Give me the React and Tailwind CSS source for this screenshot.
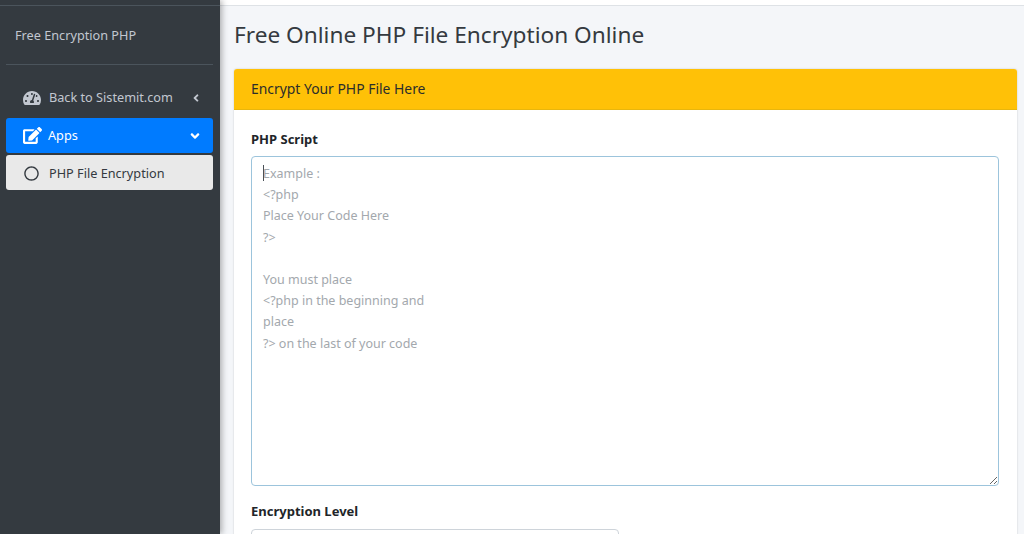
import React from 'react';
import { FaTachometerAlt, FaEdit, FaAngleLeft, FaAngleDown, FaRegCircle } from 'react-icons/fa';

const placeholder = `Example :
<?php
Place Your Code Here
?>

You must place
<?php in the beginning and
place
?> on the last of your code`;

export default function App() {
  return (
    <div className="flex h-screen overflow-hidden bg-[#f4f6f9] text-[#343a40] font-['Noto_Sans',sans-serif]">
      {/* Sidebar */}
      <aside className="w-[220px] shrink-0 bg-[#343a40] shadow-[2px_0_6px_rgba(0,0,0,0.3)] z-10 pt-[5px]">
        <div className="border-t border-[#4b545c]">
          <div className="ml-[6px] mr-[7px] h-[59px] pl-[9px] pt-[2px] flex items-center border-b border-[#4b545c] text-[12.7px] text-[#c2c7d0]">
            Free Encryption PHP
          </div>
        </div>
        <nav className="ml-[6px] mr-[7px] mt-[14px] flex flex-col gap-[2px] text-[12.7px]">
          <div className="h-[35px] mb-[2px] pt-[2px] flex items-center pl-[17px] pr-[11px] text-[#c2c7d0]">
            <FaTachometerAlt className="w-[18px] h-[18px] mr-[8px]" />
            <span className="flex-1">Back to Sistemit.com</span>
            <FaAngleLeft className="w-[12px] h-[12px]" />
          </div>
          <div className="h-[35px] flex items-center pl-[17px] pr-[11px] bg-[#007bff] rounded-[3px] text-white">
            <FaEdit className="w-[19px] h-[19px] mr-[6px]" />
            <span className="flex-1">Apps</span>
            <FaAngleDown className="w-[14px] h-[14px]" />
          </div>
          <div className="h-[35px] pt-[2px] flex items-center pl-[18px] bg-[#e9e9e9] rounded-[3px] text-[#343a40]">
            <FaRegCircle className="w-[15px] h-[15px] mr-[10px]" />
            <span>PHP File Encryption</span>
          </div>
        </nav>
      </aside>

      {/* Content */}
      <main className="flex-1 min-w-0 flex flex-col">
        <div className="h-[6px] shrink-0 bg-white border-b border-[#dee2e6]" />
        <h1 className="ml-[14px] mt-[13px] text-[22.65px] leading-[31px] text-[#343a40]">
          Free Online PHP File Encryption Online
        </h1>
        <section className="ml-[14px] mr-[7px] mt-[19px] bg-white rounded-t-[3px] shadow-[0_0_2px_rgba(0,0,0,0.2)] flex-1">
          <div className="h-[41px] flex items-center px-[17px] bg-[#ffc107] rounded-t-[3px] text-[13.9px] text-[#2b2d2b] border-b border-[#e8b60d]">
            Encrypt Your PHP File Here
          </div>
          <div className="pl-[17px] pr-[18px] pt-[19px]">
            <label className="block text-[13px] font-bold leading-[20px] text-[#212529]">PHP Script</label>
            <div className="relative mt-[7px]">
              <textarea
                readOnly
                placeholder={placeholder}
                className="block w-full h-[330px] px-[11px] py-[6px] border border-[#9cc4dc] rounded-[4px] bg-white text-[12.5px] leading-[21.2px] placeholder:text-[#a3a8ad] outline-none resize-y"
              />
              {/* text caret of the focused field */}
              <div className="absolute left-[12px] top-[9px] w-px h-[16px] bg-[#495057]" />
            </div>
            <label className="block mt-[15px] text-[13px] font-bold leading-[20px] text-[#212529]">Encryption Level</label>
            <div className="w-[368px] h-[36px] mt-[8px] border border-[#ced4da] rounded-[4px] bg-white" />
          </div>
        </section>
      </main>
    </div>
  );
}
